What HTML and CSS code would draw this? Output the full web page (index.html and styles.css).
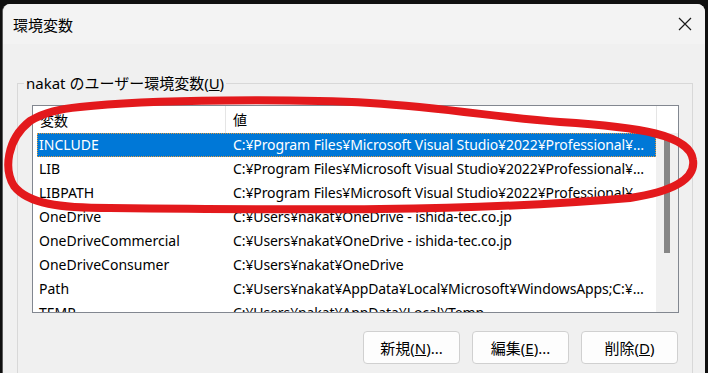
FILE: index.html
```html
<!DOCTYPE html>
<html lang="ja">
<head>
    <meta charset="UTF-8">
    <title>環境変数</title>
    <link rel="stylesheet" href="styles.css">
</head>
<body>
    <div class="window">
        <div class="titlebar">
            <span class="title">環境変数</span>
            <svg class="close" width="14" height="14" viewBox="0 0 14 14">
                <path d="M1 1 L13 13 M13 1 L1 13" stroke="#1a1a1a" stroke-width="1.2" fill="none"/>
            </svg>
        </div>

        <fieldset class="group">
            <legend>nakat のユーザー環境変数(<u>U</u>)</legend>
            <div class="group-body">
                <div class="list">
                    <div class="list-header">
                        <div class="col-name">変数</div>
                        <div class="col-value">値</div>
                    </div>
                    <div class="list-body">
                        <div class="rows">
                            <div class="row selected"><span>INCLUDE</span><span>C:¥Program Files¥Microsoft Visual Studio¥2022¥Professional¥VC¥Tools¥MSVC</span></div>
                            <div class="row"><span>LIB</span><span>C:¥Program Files¥Microsoft Visual Studio¥2022¥Professional¥VC¥Tools¥MSVC</span></div>
                            <div class="row"><span>LIBPATH</span><span>C:¥Program Files¥Microsoft Visual Studio¥2022¥Professional¥VC¥Tools¥MSVC</span></div>
                            <div class="row"><span>OneDrive</span><span>C:¥Users¥nakat¥OneDrive - ishida-tec.co.jp</span></div>
                            <div class="row"><span>OneDriveCommercial</span><span>C:¥Users¥nakat¥OneDrive - ishida-tec.co.jp</span></div>
                            <div class="row"><span>OneDriveConsumer</span><span>C:¥Users¥nakat¥OneDrive</span></div>
                            <div class="row"><span>Path</span><span>C:¥Users¥nakat¥AppData¥Local¥Microsoft¥WindowsApps;C:¥Users¥nakat</span></div>
                            <div class="row"><span>TEMP</span><span>C:¥Users¥nakat¥AppData¥Local¥Temp</span></div>
                        </div>
                        <div class="scrollbar"><div class="thumb"></div></div>
                    </div>
                </div>

                <div class="buttons">
                    <button>新規(<u>N</u>)...</button>
                    <button>編集(<u>E</u>)...</button>
                    <button>削除(<u>D</u>)</button>
                </div>
            </div>
        </fieldset>
    </div>

    <!-- red pen circle drawn over the list -->
    <svg class="marker" width="708" height="373" viewBox="0 0 708 373">
        <path d="M80 107 C150 99, 300 99, 370 103 C450 108, 500 118, 560 122 C640 127, 690 135, 693 160 C696 180, 670 192, 630 198 C560 204, 470 208, 380 209 C290 210, 200 209, 110 208 C60 208, 28 204, 14 186 C4 170, 6 140, 30 121 C45 112, 60 109, 80 107 Z"
              stroke="#e3191c" stroke-width="8" fill="none" stroke-linecap="round" stroke-linejoin="round"/>
    </svg>
</body>
</html>
```

FILE: styles.css
```css
body {
    margin: 0;
    background: #101010;
    font-family: "Noto Sans", "Noto Sans CJK JP", sans-serif;
    font-size: 14px;
    color: #000;
    overflow: hidden;
    height: 373px;
}

.window {
    margin: 4px 3px 0 2px;
    height: 369px;
    background: #f0f0f0;
    border-left: 1px solid #5c5c5c;
    border-radius: 8px 8px 0 0;
    overflow: hidden;
}

.titlebar {
    height: 40px;
    display: flex;
    align-items: center;
    justify-content: space-between;
    padding: 0 13px 0 10px;
    background: #f3f3f3;
}

.title {
    font-size: 15px;
}

.close {
    display: block;
}

.group {
    margin: 29px 12px 0 14px;
    padding: 0;
    border: 1px solid #d8d8d8;
    height: 400px;
}

.group legend {
    margin-left: 6px;
    padding: 0 2px;
    line-height: 20px;
    font-size: 15px;
}

.group-body {
    padding: 12px 13px 0 14px;
}

.list {
    border: 1px solid #828790;
    background: #fff;
}

.list-header {
    display: flex;
    height: 27px;
    padding-left: 4px;
    align-items: center;
}

.col-name {
    width: 185px;
    padding-left: 3px;
}

.col-value {
    flex: 1;
    height: 27px;
    line-height: 27px;
    padding-left: 7px;
    border-left: 1px solid #e5e5e5;
    border-right: 1px solid #e5e5e5;
    margin-right: 21px;
}

.list-body {
    display: flex;
    height: 179px;
    overflow: hidden;
}

.rows {
    width: 619px;
    padding-left: 4px;
}

.row {
    display: grid;
    grid-template-columns: 188px 431px;
    height: 24px;
    line-height: 24px;
    white-space: nowrap;
}

.row span {
    overflow: hidden;
    text-overflow: ellipsis;
}

.row span:first-child {
    padding-left: 2px;
}

.row span:last-child {
    padding: 0 6px 0 8px;
    letter-spacing: -0.1px;
}

.row.selected {
    background: #0078d7;
    color: #fff;
    outline: 1px dotted #e39a3c;
    outline-offset: -1px;
}

.scrollbar {
    width: 22px;
    background: #f0f0f0;
}

.thumb {
    margin: 2px 0 0 8px;
    width: 6px;
    height: 118px;
    background: #868686;
}

.buttons {
    display: flex;
    justify-content: flex-end;
    gap: 12px;
    margin-top: 18px;
    padding-right: 1px;
}

.buttons button {
    width: 97px;
    height: 33px;
    background: #fdfdfd;
    border: 1px solid #d0d0d0;
    border-radius: 4px;
    font-family: inherit;
    font-size: 15px;
    color: #000;
    padding: 0;
}

.marker {
    position: absolute;
    top: 0;
    left: 0;
}
```
